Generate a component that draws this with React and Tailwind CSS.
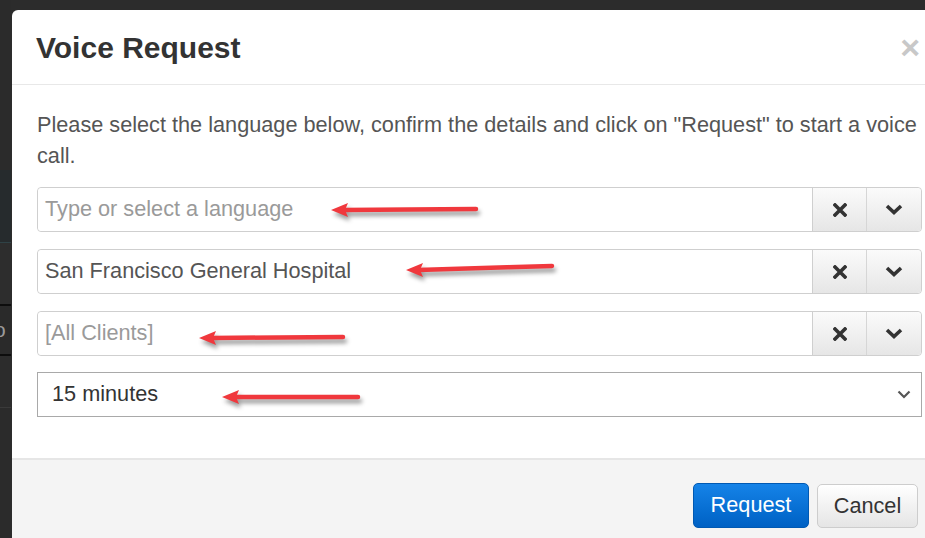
import React from 'react';

const font = { fontFamily: '"Liberation Sans", Arial, sans-serif' };

const XIcon = () => (
    <svg width="14" height="14" viewBox="0 0 14 14">
        <path d="M2 2 L12 12 M12 2 L2 12" stroke="#333" strokeWidth="3.6" strokeLinecap="square" />
    </svg>
);

const Chevron = () => (
    <svg width="18" height="11" viewBox="0 0 18 11">
        <polyline points="2,2 9,8.5 16,2" fill="none" stroke="#333" strokeWidth="3.6" />
    </svg>
);

const ComboInput = ({ value, placeholder, className }) => (
    <div className={`flex h-[45px] rounded-[4px] border border-[#cfcfcf] ${className}`}>
        <div className="flex-1 flex items-center pl-[7px] bg-white rounded-l-[4px]">
            {value ? (
                <span className="text-[#555]">{value}</span>
            ) : (
                <span className="text-[#9a9a9a]">{placeholder}</span>
            )}
        </div>
        <button className="w-[54px] flex items-center justify-center border-l border-[#cfcfcf] bg-gradient-to-b from-[#fbfbfb] to-[#e6e6e6]">
            <XIcon />
        </button>
        <button className="w-[55px] flex items-center justify-center border-l border-[#d6d6d6] rounded-r-[4px] bg-gradient-to-b from-[#fbfbfb] to-[#e6e6e6]">
            <Chevron />
        </button>
    </div>
);

const Arrow = ({ x1, y1, x2, y2 }) => {
    const minX = Math.min(x1, x2) - 12;
    const minY = Math.min(y1, y2) - 14;
    const w = Math.abs(x2 - x1) + 24;
    const h = Math.abs(y2 - y1) + 28;
    const tx = x1 - minX, ty = y1 - minY, ex = x2 - minX, ey = y2 - minY;
    return (
        <svg
            className="absolute drop-shadow-[2px_4px_2px_rgba(0,0,0,0.4)]"
            style={{ left: minX, top: minY }}
            width={w}
            height={h}
        >
            <line x1={tx + 12} y1={ty} x2={ex} y2={ey} stroke="#f0383d" strokeWidth="4.5" strokeLinecap="round" />
            <polygon points={`${tx},${ty} ${tx + 17},${ty - 7} ${tx + 14},${ty} ${tx + 17},${ty + 7}`} fill="#f0383d" />
        </svg>
    );
};

const App = () => {
    return (
        <div className="relative w-[925px] h-[538px] overflow-hidden bg-[#2c2c2c] flex text-[21.7px]" style={font}>
            <div className="w-[11px] shrink-0 flex flex-col">
                <div className="h-[170px] bg-[#2b2b2b]" />
                <div className="h-[73px] bg-[#262b2d] border-b border-[#2f4246]" />
                <div className="h-[61px] bg-[#2d2d2d]" />
                <div className="h-[52px] bg-[#2a2a2a] border-y-2 border-[#0d0d0d] flex items-center overflow-hidden">
                    <span className="text-[#9a9a9a] text-[21px] -ml-[6px]">o</span>
                </div>
                <div className="h-[52px] bg-[#2c2c2c] border-b border-[#3a3a3a]" />
                <div className="flex-1 bg-[#2b2b2b]" />
            </div>
            <div className="flex-1 pt-[10px] pl-[1px] bg-[#2c2c2c]">
                <div className="w-[935px] h-[540px] bg-white rounded-tl-[6px] flex flex-col">
                    <div className="h-[75px] shrink-0 flex items-center justify-between pl-[24px] pr-[27px] border-b border-[#e8e8e8]">
                        <h4 className="text-[30px] font-bold text-[#333]">Voice Request</h4>
                        <span className="text-[34px] font-bold text-[#c8c8c8] leading-none">×</span>
                    </div>
                    <div className="px-[25px] pt-[24px] pb-[41px] w-[935px]">
                        <p className="leading-[31px] text-[#555] mb-[16px] w-[885px]">
                            Please select the language below, confirm the details and click on "Request" to start a voice call.
                        </p>
                        <ComboInput placeholder="Type or select a language" className="mb-[17px]" />
                        <ComboInput value="San Francisco General Hospital" className="mb-[17px]" />
                        <ComboInput placeholder="[All Clients]" className="mb-[16px]" />
                        <div className="h-[45px] border border-[#a9a9a9] flex items-center justify-between pl-[14px] pr-[10px] text-[#333]">
                            <span>15 minutes</span>
                            <svg width="14" height="9" viewBox="0 0 14 9">
                                <polyline points="1.5,1.5 7,7 12.5,1.5" fill="none" stroke="#555" strokeWidth="2.2" />
                            </svg>
                        </div>
                    </div>
                    <div className="flex-1 bg-[#f4f4f4] border-t-2 border-[#e6e6e6] pt-[23px] pr-[29px] flex justify-end items-start gap-[8px]">
                        <button className="w-[116px] h-[45px] rounded-[5px] border border-[#0059b3] bg-gradient-to-b from-[#1583e8] to-[#0061c4] text-white">
                            Request
                        </button>
                        <button className="w-[101px] h-[44px] mt-[1px] rounded-[5px] border border-[#cdcdcd] bg-gradient-to-b from-white to-[#e5e5e5] text-[#333]">
                            Cancel
                        </button>
                    </div>
                </div>
            </div>
            <Arrow x1={331} y1={210} x2={476} y2={209} />
            <Arrow x1={406} y1={270} x2={552} y2={266} />
            <Arrow x1={199} y1={338} x2={343} y2={337} />
            <Arrow x1={222} y1={397} x2={358} y2={397} />
        </div>
    );
};

export default App;
